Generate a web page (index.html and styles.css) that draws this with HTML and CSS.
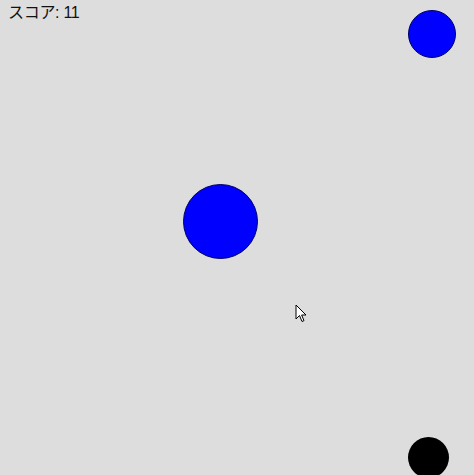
FILE: index.html
```html
<!DOCTYPE html>
<html lang="ja">
<head>
<meta charset="utf-8">
<link rel="stylesheet" href="styles.css">
</head>
<body>
<div class="game">
  <div class="score">スコア: 11</div>
  <div class="ball ball-small"></div>
  <div class="ball ball-big"></div>
  <div class="ball ball-black"></div>
  <svg class="cursor" width="14" height="20" viewBox="0 0 14 20">
    <path d="M1 1 L1 15 L4.5 11.5 L7 17.5 L9 16.6 L6.6 11 L11 11 Z" fill="#fff" stroke="#000" stroke-width="1" stroke-linejoin="round"/>
  </svg>
</div>
</body>
</html>
```
FILE: styles.css
```css
html, body {
  margin: 0;
  padding: 0;
  background: #dddddd;
}
.game {
  position: relative;
  width: 474px;
  height: 475px;
  overflow: hidden;
  background: #dddddd;
}
.score {
  position: absolute;
  left: 8px;
  top: 3px;
  font-family: "Liberation Sans", "Noto Sans CJK JP", sans-serif;
  font-size: 16px;
  line-height: 20px;
  letter-spacing: -0.3px;
  color: #111;
}
.ball {
  position: absolute;
  border-radius: 50%;
  box-sizing: border-box;
}
.ball-small {
  left: 408px;
  top: 10px;
  width: 48px;
  height: 48px;
  background: #0000ff;
  border: 1px solid #000066;
}
.ball-big {
  left: 183px;
  top: 184px;
  width: 75px;
  height: 75px;
  background: #0000ff;
  border: 1px solid #000066;
}
.ball-black {
  left: 408px;
  top: 437px;
  width: 41px;
  height: 41px;
  background: #000;
}
.cursor {
  position: absolute;
  left: 295px;
  top: 304px;
}
```
